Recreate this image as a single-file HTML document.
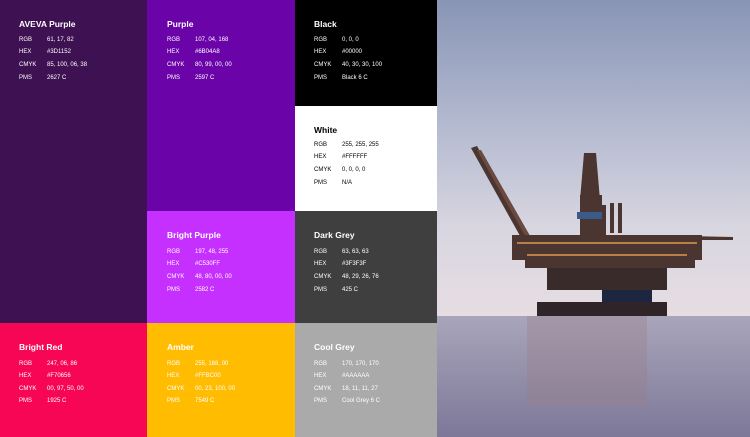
<!DOCTYPE html>
<html><head><style>
*{margin:0;padding:0;box-sizing:border-box}
body{width:750px;height:437px;overflow:hidden;position:relative;font-family:"Liberation Sans",sans-serif;background:#fff}
.c{position:absolute;color:#fff}
.c h3{position:absolute;left:19px;top:19px;font-size:8.5px;font-weight:bold}
.c .r{position:absolute;left:19px;font-size:6px;white-space:nowrap}
.c .r span{position:absolute;left:28px}
</style></head><body>
<div class="c" style="left:0;top:0;width:147px;height:323px;background:#3d1152">
<h3>AVEVA Purple</h3>
<div class="r" style="top:37px">RGB<span>61, 17, 82</span></div>
<div class="r" style="top:49px">HEX<span>#3D1152</span></div>
<div class="r" style="top:62px">CMYK<span>85, 100, 06, 38</span></div>
<div class="r" style="top:75px">PMS<span>2627 C</span></div>
</div>
<div class="c" style="left:147px;top:0;width:148px;height:211px;background:#6b04a8">
<h3 style="left:20px">Purple</h3>
<div class="r" style="top:37px;left:20px">RGB<span>107, 04, 168</span></div>
<div class="r" style="top:49px;left:20px">HEX<span>#6B04A8</span></div>
<div class="r" style="top:62px;left:20px">CMYK<span>80, 99, 00, 00</span></div>
<div class="r" style="top:75px;left:20px">PMS<span>2597 C</span></div>
</div>
<div class="c" style="left:295px;top:0;width:142px;height:106px;background:#000">
<h3>Black</h3>
<div class="r" style="top:37px">RGB<span>0, 0, 0</span></div>
<div class="r" style="top:49px">HEX<span>#00000</span></div>
<div class="r" style="top:62px">CMYK<span>40, 30, 30, 100</span></div>
<div class="r" style="top:75px">PMS<span>Black 6 C</span></div>
</div>
<div class="c" style="left:295px;top:106px;width:142px;height:105px;background:#fff;color:#000">
<h3>White</h3>
<div class="r" style="top:36px">RGB<span>255, 255, 255</span></div>
<div class="r" style="top:48px">HEX<span>#FFFFFF</span></div>
<div class="r" style="top:61px">CMYK<span>0, 0, 0, 0</span></div>
<div class="r" style="top:74px">PMS<span>N/A</span></div>
</div>
<div class="c" style="left:147px;top:211px;width:148px;height:112px;background:#c530ff">
<h3 style="left:20px">Bright Purple</h3>
<div class="r" style="top:38px;left:20px">RGB<span>197, 48, 255</span></div>
<div class="r" style="top:50px;left:20px">HEX<span>#C530FF</span></div>
<div class="r" style="top:63px;left:20px">CMYK<span>48, 80, 00, 00</span></div>
<div class="r" style="top:76px;left:20px">PMS<span>2582 C</span></div>
</div>
<div class="c" style="left:295px;top:211px;width:142px;height:112px;background:#3f3f3f">
<h3>Dark Grey</h3>
<div class="r" style="top:38px">RGB<span>63, 63, 63</span></div>
<div class="r" style="top:50px">HEX<span>#3F3F3F</span></div>
<div class="r" style="top:63px">CMYK<span>48, 29, 26, 76</span></div>
<div class="r" style="top:76px">PMS<span>425 C</span></div>
</div>
<div class="c" style="left:0;top:323px;width:147px;height:114px;background:#f70656">
<h3>Bright Red</h3>
<div class="r" style="top:38px">RGB<span>247, 06, 86</span></div>
<div class="r" style="top:50px">HEX<span>#F70656</span></div>
<div class="r" style="top:63px">CMYK<span>00, 97, 50, 00</span></div>
<div class="r" style="top:75px">PMS<span>1925 C</span></div>
</div>
<div class="c" style="left:147px;top:323px;width:148px;height:114px;background:#ffbc00">
<h3 style="left:20px">Amber</h3>
<div class="r" style="top:38px;left:20px">RGB<span>255, 188, 00</span></div>
<div class="r" style="top:50px;left:20px">HEX<span>#FFBC00</span></div>
<div class="r" style="top:63px;left:20px">CMYK<span>00, 23, 100, 00</span></div>
<div class="r" style="top:75px;left:20px">PMS<span>7549 C</span></div>
</div>
<div class="c" style="left:295px;top:323px;width:142px;height:114px;background:#aaaaaa">
<h3>Cool Grey</h3>
<div class="r" style="top:38px">RGB<span>170, 170, 170</span></div>
<div class="r" style="top:50px">HEX<span>#AAAAAA</span></div>
<div class="r" style="top:63px">CMYK<span>18, 11, 11, 27</span></div>
<div class="r" style="top:75px">PMS<span>Cool Grey 6 C</span></div>
</div>
<svg style="position:absolute;left:437px;top:0" width="313" height="437" viewBox="0 0 313 437">
<defs>
<linearGradient id="s" x1="0" y1="0" x2="0" y2="1">
<stop offset="0" stop-color="#8895b5"/><stop offset="0.4" stop-color="#b4bad0"/><stop offset="0.72" stop-color="#d8d6e0"/><stop offset="1" stop-color="#e6dde2"/></linearGradient>
<linearGradient id="w" x1="0" y1="0" x2="0" y2="1">
<stop offset="0" stop-color="#a9a5bb"/><stop offset="1" stop-color="#7d7898"/></linearGradient>
</defs>
<rect width="313" height="316" fill="url(#s)"/>
<rect y="316" width="313" height="121" fill="url(#w)"/>
<rect x="90" y="316" width="120" height="90" fill="#9a7f86" opacity="0.35"/>
<g fill="#4a3530">
<polygon points="34,148 40,146 98,250 92,252"/>
<polygon points="40,150 44,150 100,248 96,250" fill="#6a4a40"/>
<polygon points="147,153 159,153 163,200 143,200"/>
<rect x="143" y="195" width="22" height="40"/>
<rect x="140" y="212" width="28" height="7" fill="#3a5a8a"/>
<rect x="165" y="205" width="4" height="30"/><rect x="173" y="203" width="4" height="30"/><rect x="181" y="203" width="4" height="30"/>
<rect x="75" y="235" width="190" height="25"/>
<rect x="88" y="258" width="170" height="10"/>
<polygon points="200,235 296,237 296,240 200,240"/>
<rect x="165" y="290" width="50" height="26" fill="#1d2640"/>
<rect x="110" y="268" width="120" height="22" fill="#3a2b2b"/>
<rect x="100" y="302" width="130" height="14" fill="#2f2528"/>
</g>
<g fill="#e8a050" opacity="0.7">
<rect x="80" y="242" width="180" height="2"/><rect x="90" y="254" width="160" height="2"/>
</g>
</svg>
</body></html>
